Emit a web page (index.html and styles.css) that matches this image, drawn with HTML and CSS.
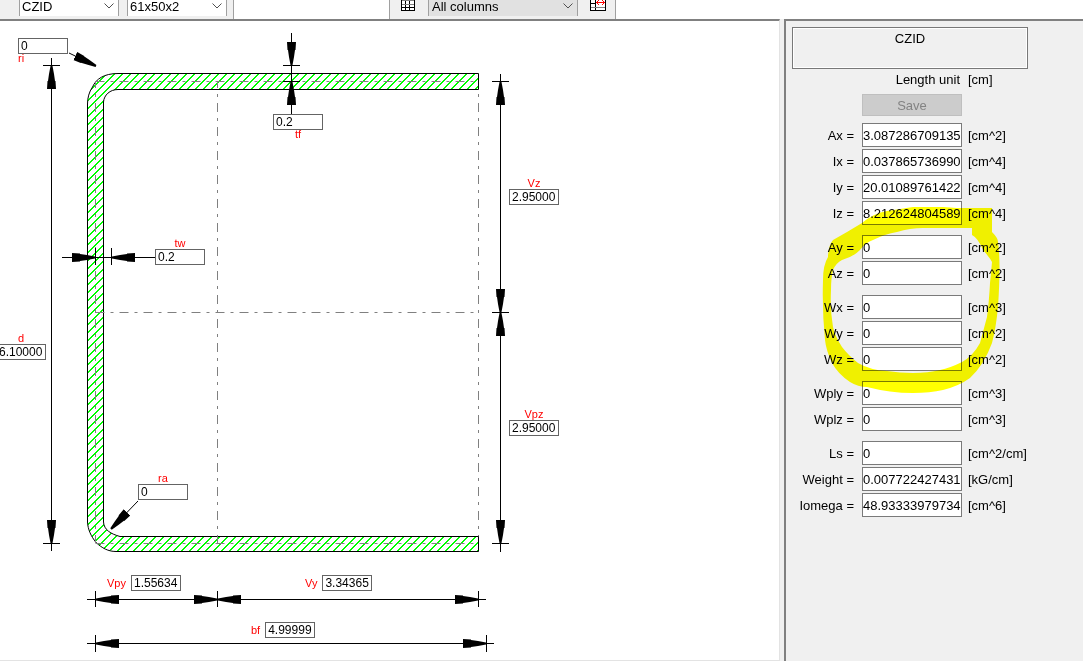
FILE: index.html
```
<!DOCTYPE html>
<html lang="en">
<head>
    <meta charset="UTF-8">
    <meta name="viewport" content="width=device-width, initial-scale=1.0">
    <title>Section editor</title>
    <link rel="stylesheet" href="styles.css">
</head>
<body>
    <header class="toolbar">
        <div class="tool-group tool-group-section">
            <span class="combo">
                <select aria-label="Section family"><option>CZID</option></select>
                <svg class="chevron" viewBox="0 0 10 6"><path d="M0.5 0.5 L5 5 L9.5 0.5"/></svg>
            </span>
            <span class="combo">
                <select aria-label="Section size"><option>61x50x2</option></select>
                <svg class="chevron" viewBox="0 0 10 6"><path d="M0.5 0.5 L5 5 L9.5 0.5"/></svg>
            </span>
        </div>
        <div class="tool-group tool-group-columns">
            <button type="button" class="tool-button" aria-label="Table">
                <svg width="16" height="16" viewBox="0 0 16 16" shape-rendering="crispEdges">
                    <rect x="1" y="0" width="14" height="16" fill="#000"/>
                    <path fill="#fff" d="M2 1h3v14h-3zM6 1h3v14h-3zM10 1h4v14h-4z"/>
                    <path stroke="#808080" d="M2 5.5h12M2 9.5h12"/>
                    <path stroke="#000" d="M1 12.5h14"/>
                </svg>
            </button>
            <span class="combo combo-wide">
                <select aria-label="Columns"><option>All columns</option></select>
                <svg class="chevron" viewBox="0 0 10 6"><path d="M0.5 0.5 L5 5 L9.5 0.5"/></svg>
            </span>
            <button type="button" class="tool-button" aria-label="Column width">
                <svg width="16" height="16" viewBox="0 0 16 16" shape-rendering="crispEdges">
                    <rect x="0" y="0" width="16" height="16" fill="#fff"/>
                    <path stroke="#000" fill="none" d="M0.5 0.5h15v15h-15zM5.5 0v16M0 8.5h6"/>
                    <path stroke="#808080" d="M1 12.5h14"/>
                    <path stroke="#f00" d="M6 7.5h9"/>
                    <path fill="#f00" d="M6 7h1v-1h1v-1h1v5h-1v-1h-1v-1h-1zM15 7h-1v-1h-1v-1h-1v5h1v-1h1v-1h1z"/>
                    <path fill="#fff" d="M8 6h1v1h-1zM8 8h1v1h-1zM12 6h1v1h-1zM12 8h1v1h-1z"/>
                </svg>
            </button>
        </div>
    </header>

    <main class="workspace">
        <section class="drawing">
            <svg class="sketch" width="100%" height="100%">
                <defs>
                    <!-- 45 degree hatch, one line every 8px -->
                    <linearGradient id="steel" gradientUnits="userSpaceOnUse" x1="0" y1="0" x2="4" y2="4" spreadMethod="repeat">
                        <stop offset="0" stop-color="#ffffff"/>
                        <stop offset="0.4" stop-color="#ffffff"/>
                        <stop offset="0.4" stop-color="#00ff00"/>
                        <stop offset="0.65" stop-color="#00ff00"/>
                        <stop offset="0.65" stop-color="#ffffff"/>
                        <stop offset="1" stop-color="#ffffff"/>
                    </linearGradient>
                    <marker id="arrow" markerUnits="userSpaceOnUse" markerWidth="24" markerHeight="10" refX="23" refY="5" orient="auto-start-reverse">
                        <path d="M0 0.5 L8 1 L8 1.500 L15 2.500 L23 4 L23 6 L15 7.500 L8 8.500 L8 9 L0 9.500 Z"/>
                    </marker>
                </defs>
                <g transform="translate(0 -21)">
                    <path class="axis" d="M478.5 79 V543"/>
                    <path class="profile" fill="url(#steel)" d="M478.5 73.5 H118 C104 73.500 96 79 92.500 87 C89 92 87.500 98 87.500 104 V522 C88 530 91 536 96 542.500 C102 548 108 551.500 116 551.500 H478.500 V536.500 H120 C111 534 104 530 103.500 522 V102 C104 95 110 89.500 118 89.500 H478.500 Z"/>
                    <path class="axis" d="M95.5 81.500 H478"/>
                    <path class="axis" d="M95.5 543.500 H478"/>
                    <path class="axis" d="M95.5 312.500 H478"/>
                    <path class="axis axis-down" d="M95.5 81 V543"/>
                    <path class="axis axis-down" d="M217.5 81 V543"/>

                    <!-- overall lines and end ticks -->
                    <g class="dim">
                        <path d="M51.5 58 V551 M43 65.500 H60 M43 543.500 H60"/>
                        <path d="M500.5 74 V552 M492 81.500 H509 M492 312.500 H509 M492 543.500 H509"/>
                        <path d="M87 599.500 H486 M95.500 591 V607 M217.500 591 V607 M478.500 591 V607"/>
                        <path d="M87 643.500 H494 M95.500 635 V652 M486.500 635 V652"/>
                        <path d="M291.5 33 V114 M283 65.500 H300 M283 81.500 H300"/>
                        <path d="M62 257.500 H155 M95.500 248 V265 M111.500 248 V265"/>
                    </g>

                    <g class="arrows">
                        <path d="M51.5 66 V543"/>
                        <path d="M500.5 82 V312"/>
                        <path d="M500.5 313 V543"/>
                        <path d="M96 599.500 H217"/>
                        <path d="M218 599.500 H478"/>
                        <path d="M96 643.500 H486"/>
                    </g>
                    <g class="pointer">
                        <path d="M291.5 33 V65"/>
                        <path d="M291.5 114 V82"/>
                        <path d="M62 257.500 H95"/>
                        <path d="M155 257.500 H112"/>
                        <path d="M69 53 L96 66"/>
                        <path d="M138 501 L111 529"/>
                    </g>
                </g>
            </svg>

            <div class="dimension below-left at-ri"><label for="ri">ri</label><input id="ri" value="0"></div>
            <div class="dimension below at-tf"><label for="tf">tf</label><input id="tf" value="0.2"></div>
            <div class="dimension at-tw"><label for="tw">tw</label><input id="tw" value="0.2"></div>
            <div class="dimension at-vz"><label for="vz">Vz</label><input id="vz" value="2.95000"></div>
            <div class="dimension at-d"><label for="d">d</label><input id="d" value="6.10000"></div>
            <div class="dimension at-vpz"><label for="vpz">Vpz</label><input id="vpz" value="2.95000"></div>
            <div class="dimension at-ra"><label for="ra">ra</label><input id="ra" value="0"></div>
            <div class="dimension inline at-vpy"><label for="vpy">Vpy</label><input id="vpy" value="1.55634"></div>
            <div class="dimension inline at-vy"><label for="vy">Vy</label><input id="vy" value="3.34365"></div>
            <div class="dimension inline at-bf"><label for="bf">bf</label><input id="bf" value="4.99999"></div>
        </section>

        <aside class="properties">
            <div class="section-name">CZID</div>
            <form class="form">
                <div class="row unit-row"><span class="caption">Length unit</span><span class="unit">[cm]</span></div>
                <div class="row save-row"><button type="button" class="save" disabled>Save</button></div>

                <div class="group">
                    <div class="row"><label for="ax">Ax =</label><input id="ax" value="3.087286709135"><span class="unit">[cm^2]</span></div>
                    <div class="row"><label for="ix">Ix =</label><input id="ix" value="0.037865736990"><span class="unit">[cm^4]</span></div>
                    <div class="row"><label for="iy">Iy =</label><input id="iy" value="20.01089761422"><span class="unit">[cm^4]</span></div>
                    <div class="row"><label for="iz">Iz =</label><input id="iz" value="8.212624804589"><span class="unit">[cm^4]</span></div>
                </div>
                <div class="group">
                    <div class="row"><label for="ay">Ay =</label><input id="ay" value="0"><span class="unit">[cm^2]</span></div>
                    <div class="row"><label for="az">Az =</label><input id="az" value="0"><span class="unit">[cm^2]</span></div>
                </div>
                <div class="group">
                    <div class="row"><label for="wx">Wx =</label><input id="wx" value="0"><span class="unit">[cm^3]</span></div>
                    <div class="row"><label for="wy">Wy =</label><input id="wy" value="0"><span class="unit">[cm^2]</span></div>
                    <div class="row"><label for="wz">Wz =</label><input id="wz" value="0"><span class="unit">[cm^2]</span></div>
                </div>
                <div class="group">
                    <div class="row"><label for="wply">Wply =</label><input id="wply" value="0"><span class="unit">[cm^3]</span></div>
                    <div class="row"><label for="wplz">Wplz =</label><input id="wplz" value="0"><span class="unit">[cm^3]</span></div>
                </div>
                <div class="group">
                    <div class="row"><label for="ls">Ls =</label><input id="ls" value="0"><span class="unit">[cm^2/cm]</span></div>
                    <div class="row"><label for="weight">Weight =</label><input id="weight" value="0.007722427431"><span class="unit">[kG/cm]</span></div>
                    <div class="row"><label for="iomega">Iomega =</label><input id="iomega" value="48.93333979734"><span class="unit">[cm^6]</span></div>
                </div>
            </form>

            <!-- marker pen round the empty values -->
            <svg class="highlight" width="100%" height="100%">
                <path transform="translate(-786 -21)" fill="#ffff00" fill-rule="evenodd" d="M992 208 V232 Q998 238 998 242 Q1001 263 998 307 Q996 328 992 343 Q984 365 970 378 Q959 386 943 390 Q930 393 913 393 Q890 393 867 387 Q858 387 850 382 Q838 374 832 363 Q826 350 825 340 Q822 310 823 280 Q823 265 828 257 Q828 246 833 240 L847 232 L862 223 Q874 213 887 211 L913 207 H943 L957 208 Z
                    M972 228 V235 Q978 238 983 250 Q990 258 992 262 Q991 274 990 283 Q989 302 987 317 L980 343 Q973 356 962 362 Q950 368 940 370 Q928 373 913 373 Q900 373 887 371 Q870 370 858 363 Q848 355 842 347 Q835 336 833 327 Q830 310 831 290 Q831 278 833 270 Q836 263 842 260 Q853 257 860 250 Q866 242 873 240 Q885 234 897 232 Q910 228 923 228 Z"/>
            </svg>
        </aside>
    </main>
</body>
</html>
```
FILE: styles.css
```
* {
    box-sizing: border-box;
}

body {
    margin: 0;
    height: 100vh;
    display: flex;
    flex-direction: column;
    overflow: hidden;
    background: #fff;
    color: #000;
    font-family: "Liberation Sans", Arial, sans-serif;
    font-size: 13px;
}

input, select, button {
    font-family: inherit;
    font-size: 13px;
    color: #000;
    border-radius: 0;
    margin: 0;
}

/* toolbar */
.toolbar {
    display: flex;
    height: 19px;
    gap: 155px;
    overflow: hidden;
}

.tool-group {
    display: flex;
    align-items: flex-end;
    background: #f0f0f0;
    border-right: 1px solid #a0a0a0;
    padding-bottom: 3px;
}

.tool-group-section {
    gap: 8px;
    padding-left: 19px;
    padding-right: 6px;
}

.tool-group-columns {
    border-left: 1px solid #a0a0a0;
    gap: 12px;
    padding-left: 10px;
    padding-right: 9px;
}

.combo {
    display: grid;
    align-items: center;
    width: 100px;
}

.combo-wide {
    width: 150px;
}

.combo select, .chevron {
    grid-area: 1 / 1;
}

.combo select {
    appearance: none;
    width: 100%;
    height: 20px;
    padding: 0 2px;
    border: 1px solid #a0a0a0;
    border-bottom: none;
    background: #fff;
}

.combo-wide select {
    background: #e1e1e1;
    padding: 0 3px;
}

.chevron {
    width: 10px;
    height: 6px;
    justify-self: end;
    margin-right: 5px;
    fill: none;
    stroke: #505050;
    pointer-events: none;
}

.tool-button {
    display: flex;
    padding: 0;
    border: none;
    background: none;
    padding-bottom: 5px;
}

/* main area */
.workspace {
    flex: 1;
    min-height: 0;
    display: flex;
    gap: 4px;
    background: #f0f0f0;
    border-bottom: 1px solid #fff;
}

.drawing {
    position: relative;
    flex: 1;
    min-width: 0;
    overflow: hidden;
    background: #fff;
    border-top: 2px solid #808080;
    border-right: 1px solid #e3e3e3;
    border-bottom: 1px solid #e3e3e3;
}

.sketch {
    display: block;
}

.profile {
    stroke: #000;
}

.axis {
    fill: none;
    stroke: #808080;
    stroke-dasharray: 9 6 3 6;
}

.axis-down {
    stroke-dashoffset: 2;
}

.dim path {
    stroke: #000;
}

.arrows path {
    stroke: #000;
    marker-start: url(#arrow);
    marker-end: url(#arrow);
}

.pointer path {
    stroke: #000;
    marker-end: url(#arrow);
}

/* editable dimensions on the sketch */
.dimension {
    position: absolute;
    display: flex;
    flex-direction: column;
    align-items: center;
}

.dimension label {
    color: #ff0000;
    font-size: 11px;
    line-height: 12px;
}

.dimension input {
    width: 50px;
    height: 16px;
    padding: 0 2px;
    border: 1px solid #646464;
    background: #fff;
    font-size: 12px;
}

.below, .below-left {
    flex-direction: column-reverse;
}

.below label, .below-left label {
    line-height: 9px;
}

.below-left {
    align-items: flex-start;
}

.inline {
    flex-direction: row;
    gap: 5px;
}

.at-ri { left: 18px; top: 17px; }
.at-tf { left: 273px; top: 93px; }
.at-tw { left: 155px; top: 216px; }
.at-vz { left: 509px; top: 156px; }
.at-d { left: -4px; top: 311px; }
.at-vpz { left: 509px; top: 387px; }
.at-ra { left: 138px; top: 451px; }
.at-vpy { left: 107px; top: 554px; }
.at-vy { left: 305px; top: 554px; }
.at-bf { left: 251px; top: 601px; }

/* property panel */
.properties {
    position: relative;
    width: 299px;
    padding: 6px;
    border-top: 2px solid #808080;
    border-left: 2px solid #808080;
}

.section-name {
    width: 236px;
    height: 42px;
    padding-top: 3px;
    border: 1px solid #787878;
    outline: 1px solid #fff;
    outline-offset: -2px;
    text-align: center;
    line-height: 16px;
}

.form {
    width: 236px;
}

.row {
    display: grid;
    grid-template-columns: 64px 100px 1fr;
    column-gap: 6px;
    align-items: center;
}

.row label {
    text-align: right;
    padding-right: 2px;
    white-space: nowrap;
}

.row input {
    width: 100%;
    height: 24px;
    padding: 0;
    border: 1px solid #7a7a7a;
    background: #fff;
}

.unit {
    overflow: hidden;
    white-space: nowrap;
}

.unit-row {
    height: 20px;
}

.caption {
    grid-column: 1 / 3;
    text-align: right;
    padding-right: 2px;
}

.save-row {
    padding: 5px 0 7px;
}

.save {
    grid-column: 2;
    height: 22px;
    padding: 0;
    border: 1px solid #bfbfbf;
    background: #ccc;
    color: #838383;
}

.group {
    display: grid;
    gap: 2px;
    margin-bottom: 10px;
}

.highlight {
    position: absolute;
    left: 0;
    top: 0;
    mix-blend-mode: multiply;
    pointer-events: none;
}
```
